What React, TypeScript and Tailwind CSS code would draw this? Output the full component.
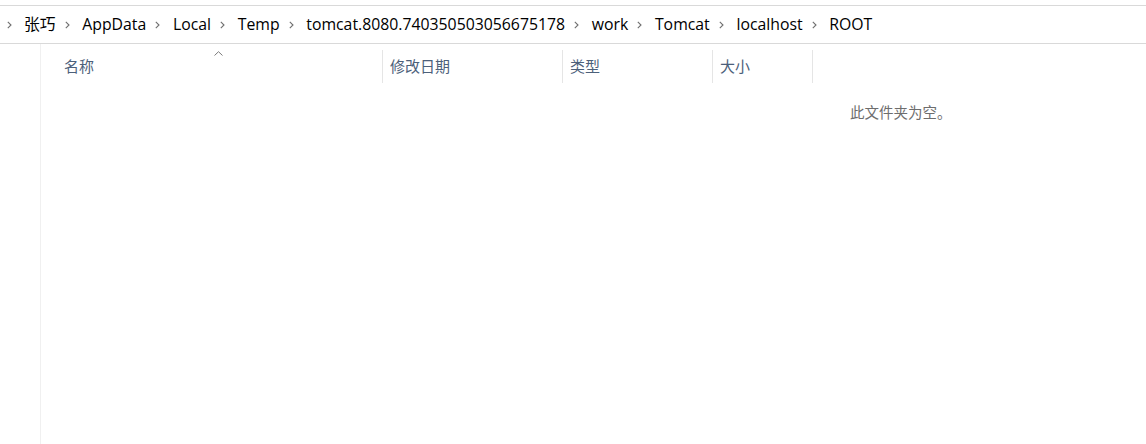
import React from 'react';

const crumbs = ['张巧', 'AppData', 'Local', 'Temp', 'tomcat.8080.740350503056675178', 'work', 'Tomcat', 'localhost', 'ROOT'];

const columns = [
  { label: '名称', width: 'w-[342px]', pad: 'pl-[23px]' },
  { label: '修改日期', width: 'w-[180px]', pad: 'pl-[7px]' },
  { label: '类型', width: 'w-[150px]', pad: 'pl-[7px]' },
  { label: '大小', width: 'w-[100px]', pad: 'pl-[7px]' },
];

function Chevron() {
  return (
    <span className="flex w-[12px] justify-center">
      <svg width="5" height="8" viewBox="0 0 5 8" fill="none">
        <path d="M0.8 0.8 L4 4 L0.8 7.2" stroke="#6f6f6f" strokeWidth="1.1" />
      </svg>
    </span>
  );
}

export default function App() {
  return (
    <div
      className="h-[444px] w-[1146px] overflow-hidden bg-white"
      style={{ fontFamily: '"Segoe UI", "Open Sans", "Noto Sans CJK SC", sans-serif' }}
    >
      {/* Address bar */}
      <div className="mt-[5px] flex h-[39px] items-center border-y border-[#d9d9d9] pl-[3px] text-[15.8px] text-black">
        {crumbs.map((c) => (
          <div key={c} className="flex items-center">
            <Chevron />
            <span className="ml-[9px] mr-[5.7px] whitespace-nowrap">{c}</span>
          </div>
        ))}
      </div>

      <div className="flex h-[400px]">
        {/* Navigation pane edge */}
        <div className="w-[41px] shrink-0 border-r border-[#f0f0f0]" />

        <div className="flex-1">
          {/* Column headers */}
          <div className="mt-[6px] flex h-[33px] text-[15px] text-[#4c607a]">
            {columns.map((col, i) => (
              <div
                key={col.label}
                className={`relative flex items-center border-r border-[#e5e5e5] ${col.width} ${col.pad}`}
              >
                {i === 0 && (
                  <svg
                    className="absolute left-[173px] top-[1px]"
                    width="9"
                    height="5"
                    viewBox="0 0 9 5"
                    fill="none"
                  >
                    <path d="M0.5 4.5 L4.5 0.7 L8.5 4.5" stroke="#7a7a7a" strokeWidth="1" />
                  </svg>
                )}
                <span>{col.label}</span>
              </div>
            ))}
          </div>

          {/* Empty message */}
          <div className="mt-[19px] pl-[809px] text-[14.5px] text-[#6d6d6d]">此文件夹为空。</div>
        </div>
      </div>
    </div>
  );
}
